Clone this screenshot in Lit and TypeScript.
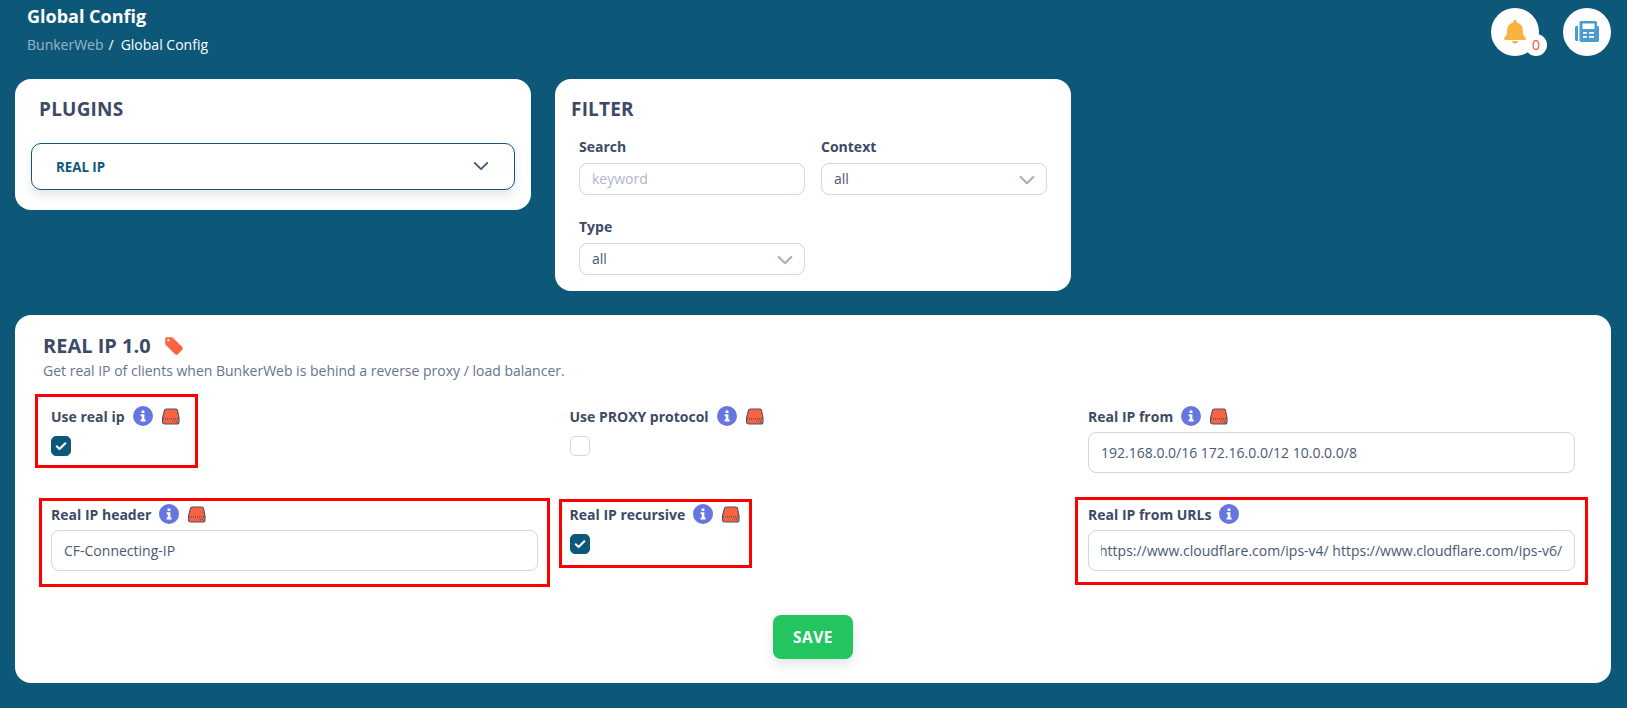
import { LitElement, html, css, svg } from "lit";
import { customElement } from "lit/decorators.js";

const chevron = html`<svg class="chev" viewBox="0 0 20 12" fill="none" stroke="currentColor" stroke-width="2.400" stroke-linecap="round" stroke-linejoin="round"><path d="M3 2l7 7 7-7"/></svg>`;
const info = html`<svg class="ico" viewBox="0 0 20 20"><circle cx="10" cy="10" r="10" fill="#6576e0"/><path fill="#fff" d="M8.600 4.400h2.800v2.500H8.600zM7.700 8.300h3.700v5.200h1.200v2H7.600v-2h1.200v-3.200H7.700z"/></svg>`;
const disk = html`<svg class="disk" viewBox="0 0 18 17"><path d="M4.200 1h9.600c.9 0 1.500.5 1.700 1.300l1.500 7.400v4c0 1.200-1 2.300-2.300 2.300H2.800C1.500 16 .5 15 .5 13.700v-4L2.500 2.300C2.700 1.500 3.300 1 4.200 1z" fill="#fb6340" stroke="#46526b" stroke-width="1.100"/><path d="M1 10.800h16" stroke="#46526b" stroke-width="1.200" stroke-dasharray="1 1"/><path d="M11.800 13.500h1M14 13.500h1" stroke="#46526b" stroke-width="1.300"/></svg>`;
const check = svg`<path d="M5.200 10.400l3.200 3 6.400-6.400" fill="none" stroke="#fff" stroke-width="2.300" stroke-linecap="round" stroke-linejoin="round"/>`;

@customElement("app-root")
export class AppRoot extends LitElement {
  static styles = css`
    :host { display: block; height: 708px; overflow: hidden; background: #0d5878; font-family: "Open Sans", sans-serif; color: #3d4a66; }
    * { box-sizing: border-box; }
    .top { display: flex; justify-content: space-between; height: 79px; padding: 4px 16px 0 27px; }
    .crumb-title { font-size: 18px; font-weight: 700; line-height: 25px; color: #fff; }
    .crumbs { margin-top: 5px; display: flex; font-size: 14px; line-height: 22px; color: #fff; }
    .crumbs .dim { opacity: .55; margin-right: 5px; }
    .crumbs .sep { margin-right: 7px; }
    .round-group { display: flex; gap: 24px; padding-top: 4px; }
    .round { position: relative; width: 48px; height: 48px; border-radius: 50%; background: #fff; display: flex; align-items: center; justify-content: center; }
    .badge { position: absolute; right: -8px; bottom: 0; width: 22px; height: 22px; border-radius: 50%; background: #fff; color: #f0533c; font-size: 14px; line-height: 22px; text-align: center; }
    .bell { width: 22px; height: 24px; }
    .fax { width: 24px; height: 22px; }
    .filters { display: grid; grid-template-columns: repeat(3, 516px); gap: 24px; padding: 0 16px 0 15px; align-items: start; }
    .card { background: #fff; border-radius: 16px; }
    .plugins { height: 131px; padding: 16px; }
    h2 { margin: 0; font-size: 19px; line-height: 28px; font-weight: 700; color: #3d4a66; letter-spacing: .2px; }
    .plugins h2 { padding-left: 8px; }
    .dropdown { margin-top: 20px; height: 47px; width: 100%; border: 1px solid #0d5878; border-radius: 10px; background: #fff; display: flex; align-items: center; justify-content: space-between; padding: 0 24px; box-shadow: 0 6px 10px rgba(60, 70, 100, .12); font: 700 13.300px "Open Sans", sans-serif; color: #0d5878; }
    .dropdown .chev { width: 18px; height: 11px; color: #3d5270; stroke-width: 1.900; }
    .filter { height: 212px; padding: 16px; }
    .filter-grid { margin-top: 13px; padding: 0 8px; display: grid; grid-template-columns: 226px 226px; column-gap: 16px; row-gap: 21px; }
    label { display: block; font-size: 14px; font-weight: 700; line-height: 22px; color: #3d4a66; }
    .fld { margin-top: 5px; position: relative; }
    .fld input, .fld select { display: block; width: 100%; height: 32px; border: 1px solid #d2d6de; border-radius: 8px; background: #fff; padding: 0 12px 2px; font: 400 14px "Open Sans", sans-serif; color: #4a5872; appearance: none; outline: none; }
    .fld input::placeholder { color: #aeb6c4; }
    .fld .chev { position: absolute; right: 11px; top: 12px; width: 18px; height: 11px; color: #a4b1c2; pointer-events: none; }
    .main { margin: 24px 16px 0 15px; height: 368px; padding: 17px 28px 24px; position: relative; display: flex; flex-direction: column; }
    .main-title { display: flex; align-items: center; gap: 13px; font-size: 20px; line-height: 28px; font-weight: 700; color: #3d4a66; }
    .tag { width: 20px; height: 20px; }
    .desc { font-size: 14px; line-height: 20px; color: #67748e; margin-top: 1px; }
    .settings { margin-top: 23px; padding: 0 8px; display: grid; grid-template-columns: repeat(3, 487px); column-gap: 31.500px; row-gap: 29px; }
    .setting { position: relative; height: 69px; }
    .lab { display: flex; align-items: center; height: 24px; gap: 8px; font-size: 14px; font-weight: 700; color: #3d4a66; }
    .lab .ico + .disk { margin-left: 1px; }
    .ico { width: 20px; height: 20px; }
    .disk { width: 18px; height: 17px; }
    .setting input[type="text"] { display: block; margin-top: 4px; width: 100%; height: 41px; border: 1px solid #d2d6de; border-radius: 8px; padding: 0 12px; font: 400 14px "Open Sans", sans-serif; color: #4a5872; outline: none; }
    .cb { display: block; margin-top: 8px; width: 20px; height: 20px; border-radius: 5px; border: 1px solid #d2d6de; background: #fff; }
    .cb.on { background: #0d5878; border-color: #0d5878; }
    .cb svg { display: block; width: 18px; height: 18px; }
    .mark { position: absolute; border: 3px solid #ff0000; pointer-events: none; }
    .m1 { left: -16px; top: -10px; width: 163px; height: 74px; }
    .m2 { left: -12px; top: -4px; width: 511px; height: 89px; }
    .m3 { left: -11px; top: -3px; width: 193px; height: 69px; }
    .m4 { left: -13px; top: -5px; width: 513px; height: 88px; }
    .save-row { display: flex; justify-content: center; margin-top: auto; }
    .save { width: 80px; height: 44px; border: 0; border-radius: 8px; background: #22c55e; color: #fff; font: 700 15.500px "Open Sans", sans-serif; letter-spacing: .5px; box-shadow: 0 6px 12px rgba(60, 70, 100, .14); }
  `;

  firstUpdated() {
    const el = this.renderRoot.querySelector<HTMLInputElement>("#urls");
    if (el) el.scrollLeft = el.scrollWidth;
  }

  private label(text: string, hasDisk = true) {
    return html`<div class="lab"><span>${text}</span>${info}${hasDisk ? disk : ""}</div>`;
  }

  private box(on: boolean) {
    return html`<span class="cb ${on ? "on" : ""}">${on ? html`<svg viewBox="0 0 20 20">${check}</svg>` : ""}</span>`;
  }

  render() {
    return html`
      <header class="top">
        <div>
          <div class="crumb-title">Global Config</div>
          <div class="crumbs"><span class="dim">BunkerWeb</span><span class="sep">/</span><span>Global Config</span></div>
        </div>
        <div class="round-group">
          <div class="round">
            <svg class="bell" viewBox="0 0 22 24"><path fill="#fbb140" d="M11 0c1 0 1.600.7 1.600 1.600v1c3.800.7 6.200 3.700 6.200 7.600 0 5 2 6.500 2.800 7.400.5.600.4 2.400-1.400 2.400H1.800C0 20-.1 18.200.4 17.600c.8-.9 2.800-2.400 2.800-7.400 0-3.900 2.400-6.900 6.200-7.600v-1C9.400.7 10 0 11 0z"/><path fill="#fbb140" d="M8 21h6c0 1.500-1.300 2.600-3 2.600S8 22.500 8 21z"/></svg>
            <span class="badge">0</span>
          </div>
          <div class="round">
            <svg class="fax" viewBox="0 0 24 22"><path fill="#4a9ccf" fill-rule="evenodd" d="M0 6.500C0 5.700.7 5 1.500 5H3v15H1.500C.7 20 0 19.300 0 18.500zM4.500 1.500C4.500.7 5.200 0 6 0h14.500c.8 0 1.500.7 1.500 1.500V5h.5c.8 0 1.500.7 1.500 1.500v13c0 .8-.7 1.500-1.500 1.500H6c-.8 0-1.500-.7-1.500-1.500zM7.500 2.500V8h12V2.500zM8 11v1.800h3.800V11zm6 0v1.800h5V11zM8 15v1.800h3.800V15zm6 0v1.800h5V15z"/></svg>
          </div>
        </div>
      </header>

      <section class="filters">
        <div class="card plugins">
          <h2>PLUGINS</h2>
          <button class="dropdown"><span>REAL IP</span>${chevron}</button>
        </div>
        <div class="card filter">
          <h2>FILTER</h2>
          <div class="filter-grid">
            <div><label>Search</label><div class="fld"><input placeholder="keyword" /></div></div>
            <div><label>Context</label><div class="fld"><select><option>all</option></select>${chevron}</div></div>
            <div><label>Type</label><div class="fld"><select><option>all</option></select>${chevron}</div></div>
          </div>
        </div>
      </section>

      <section class="card main">
        <div class="main-title">
          <span>REAL IP 1.0</span>
          <svg class="tag" viewBox="0 0 20 20"><path fill="#fb6340" d="M2.800 1.200h4.700c.6 0 1 .2 1.400.6l9.300 9.200c.8.800.8 2 0 2.800l-4.300 4.400c-.8.800-2 .8-2.800 0L1.800 8.900c-.4-.4-.6-.9-.6-1.400V2.800c0-.9.700-1.600 1.600-1.600z"/><circle cx="4.300" cy="4.300" r="1.300" fill="#fde2b0"/></svg>
        </div>
        <div class="desc">Get real IP of clients when BunkerWeb is behind a reverse proxy / load balancer.</div>
        <div class="settings">
          <div class="setting"><div class="mark m1"></div>${this.label("Use real ip")}${this.box(true)}</div>
          <div class="setting">${this.label("Use PROXY protocol")}${this.box(false)}</div>
          <div class="setting">${this.label("Real IP from")}<input type="text" .value=${"192.168.0.0/16 172.16.0.0/12 10.0.0.0/8"} /></div>
          <div class="setting"><div class="mark m2"></div>${this.label("Real IP header")}<input type="text" .value=${"CF-Connecting-IP"} /></div>
          <div class="setting"><div class="mark m3"></div>${this.label("Real IP recursive")}${this.box(true)}</div>
          <div class="setting"><div class="mark m4"></div>${this.label("Real IP from URLs", false)}<input id="urls" type="text" .value=${"https://www.cloudflare.com/ips-v4/ https://www.cloudflare.com/ips-v6/"} /></div>
        </div>
        <div class="save-row"><button class="save">SAVE</button></div>
      </section>
    `;
  }
}
